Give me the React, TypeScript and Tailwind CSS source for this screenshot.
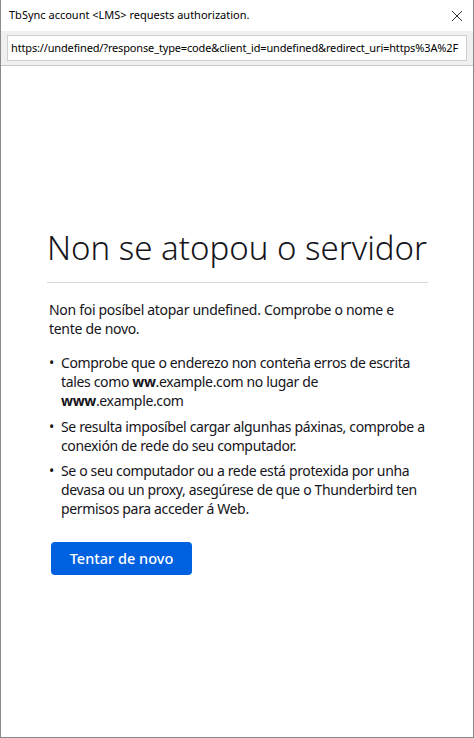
const bullets = [
  <>
    Comprobe que o enderezo non conteña erros de escrita tales como <strong>ww</strong>.example.com no lugar de{" "}
    <strong>www</strong>.example.com
  </>,
  <>Se resulta imposíbel cargar algunhas páxinas, comprobe a conexión de rede do seu computador.</>,
  <>
    Se o seu computador ou a rede está protexida por unha devasa ou un proxy, asegúrese de que o Thunderbird ten
    permisos para acceder á Web.
  </>,
]

const App = () => {
  return (
    <div className="h-[738px] w-[474px] flex flex-col bg-white border-x border-b border-[#8a8a8a] font-['Noto_Sans','Open_Sans',sans-serif] text-[#15141a]">
      <div className="h-[31px] flex items-center justify-between pl-[8px] pr-[10px] text-[11px] text-black">
        <span>TbSync account &lt;LMS&gt; requests authorization.</span>
        <svg width="12" height="12" viewBox="0 0 12 12" className="stroke-[#333]" strokeWidth="1">
          <path d="M1 1L11 11M11 1L1 11" />
        </svg>
      </div>
      <div className="h-[35px] bg-[#f0f0f0] border-b border-[#c8c8c8] px-[6px] flex items-center">
        <div className="w-full h-[26px] bg-white border border-[#cfcfcf] px-[3px] flex items-center text-[11px] tracking-[-0.15px] text-black overflow-hidden whitespace-nowrap">
          https://undefined/?response_type=code&amp;client_id=undefined&amp;redirect_uri=https%3A%2F
        </div>
      </div>
      <div className="flex-1 pl-[46px] pr-[45px] pt-[159px]">
        <h1 className="text-[33px] font-light leading-[46px] pb-[11px] whitespace-nowrap border-b border-[#d7d7db]">
          Non se atopou o servidor
        </h1>
        <div className="pl-[2px]">
          <p className="mt-[17px] text-[14px] tracking-[-0.3px] leading-[19px]">
            Non foi posíbel atopar undefined. Comprobe o nome e tente de novo.
          </p>
          <ul className="mt-[15px] flex flex-col gap-[6.5px] text-[14px] tracking-[-0.35px] leading-[19px]">
            {bullets.map((b, i) => (
              <li key={i} className="flex">
                <span className="w-[12px] shrink-0">•</span>
                <span>{b}</span>
              </li>
            ))}
          </ul>
          <button className="mt-[24px] ml-[2px] h-[33px] w-[141px] rounded-[4px] bg-[#0061e0] text-white text-[14.5px] font-medium">
            Tentar de novo
          </button>
        </div>
      </div>
    </div>
  )
}

export default App
